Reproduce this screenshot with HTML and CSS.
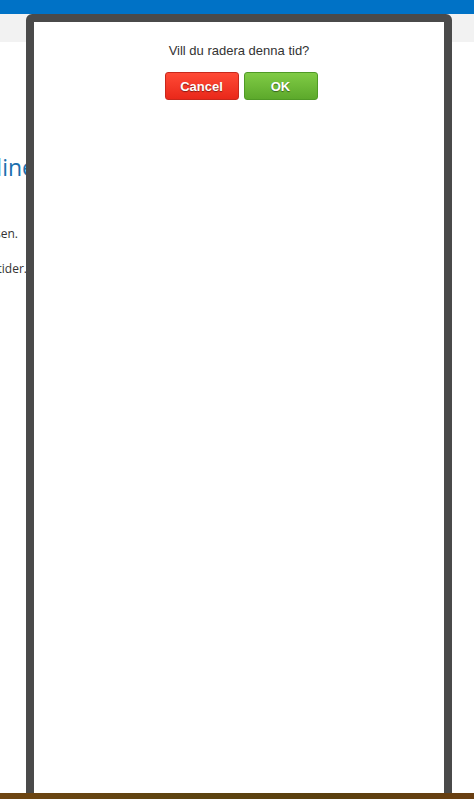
FILE: index.html
```html
<!DOCTYPE html>
<html lang="sv">
<head>
<meta charset="utf-8">
<title>Radera tid</title>
<link rel="stylesheet" href="styles.css">
</head>
<body>
<header class="topbar"></header>
<nav class="subbar"></nav>
<main class="content">
  <h1 class="title line">Boka tid online</h1>
  <p class="para line para-first">Klicka på en ledig tid för att boka den. Avboka via länken i bekräftelsen.</p>
  <p class="para line para-second"><span>Här kan du se och ändra dina bokade tider.</span><span class="tail">Du kan även avboka.</span></p>
</main>

<div class="dialog">
  <p class="dialog-msg">Vill du radera denna tid?</p>
  <div class="dialog-actions">
    <button class="btn btn-cancel">Cancel</button>
    <button class="btn btn-ok">OK</button>
  </div>
</div>

<div class="footbar"></div>
</body>
</html>
```

FILE: styles.css
```css
html, body {
  margin: 0;
  padding: 0;
  height: 100%;
  overflow: hidden;
  background: #ffffff;
  font-family: "Open Sans", "Liberation Sans", sans-serif;
}

.topbar {
  height: 14px;
  background: #0072c6;
}

.subbar {
  height: 28px;
  background: #f2f2f2;
}

.content {
  padding-top: 110px;
}

/* lines of the page behind the dialog: their right end is what shows */
.line {
  display: flex;
  justify-content: flex-end;
  white-space: nowrap;
}

.title {
  width: 35px;
  margin: 0;
  font-family: "Open Sans", "Liberation Sans", sans-serif;
  font-weight: 400;
  font-size: 23px;
  line-height: 30px;
  color: #1b6fae;
}

.para {
  margin: 0;
  font-size: 12px;
  line-height: 18px;
  color: #333333;
}

.para-first {
  width: 18px;
  margin-top: 43px;
}

.para-second {
  width: 27px;
  margin-top: 17px;
}

.tail {
  flex: 0 0 0;
  min-width: 0;
  overflow: visible;
}

.dialog {
  position: fixed;
  left: 26px;
  top: 14px;
  width: 410px;
  height: 800px;
  background: #ffffff;
  border: 8px solid #4a4a4a;
  border-radius: 6px 6px 0 0;
  font-family: "Liberation Sans", Arial, sans-serif;
  text-align: center;
}

.dialog-msg {
  margin: 0;
  padding-top: 21px;
  font-size: 13px;
  line-height: 16px;
  color: #333333;
}

.dialog-actions {
  display: flex;
  justify-content: center;
  gap: 5px;
  margin-top: 13px;
  padding-left: 4px;
}

.btn {
  width: 74px;
  height: 28px;
  padding: 0;
  border-radius: 3px;
  font-family: "Liberation Sans", Arial, sans-serif;
  font-weight: 700;
  font-size: 13px;
  color: #ffffff;
  text-shadow: 0 1px 1px rgba(0, 0, 0, 0.45);
  cursor: pointer;
}

.btn-cancel {
  background: linear-gradient(#ff4a36, #e9281a);
  border: 1px solid #c8281c;
}

.btn-ok {
  background: linear-gradient(#80cb45, #5ca92b);
  border: 1px solid #4f9a25;
}

.footbar {
  position: fixed;
  left: 0;
  right: 0;
  bottom: 0;
  height: 6px;
  background: linear-gradient(90deg, #6e4512, #5c4310 40%, #5a3f0e 70%, #6a3f12);
}
```
